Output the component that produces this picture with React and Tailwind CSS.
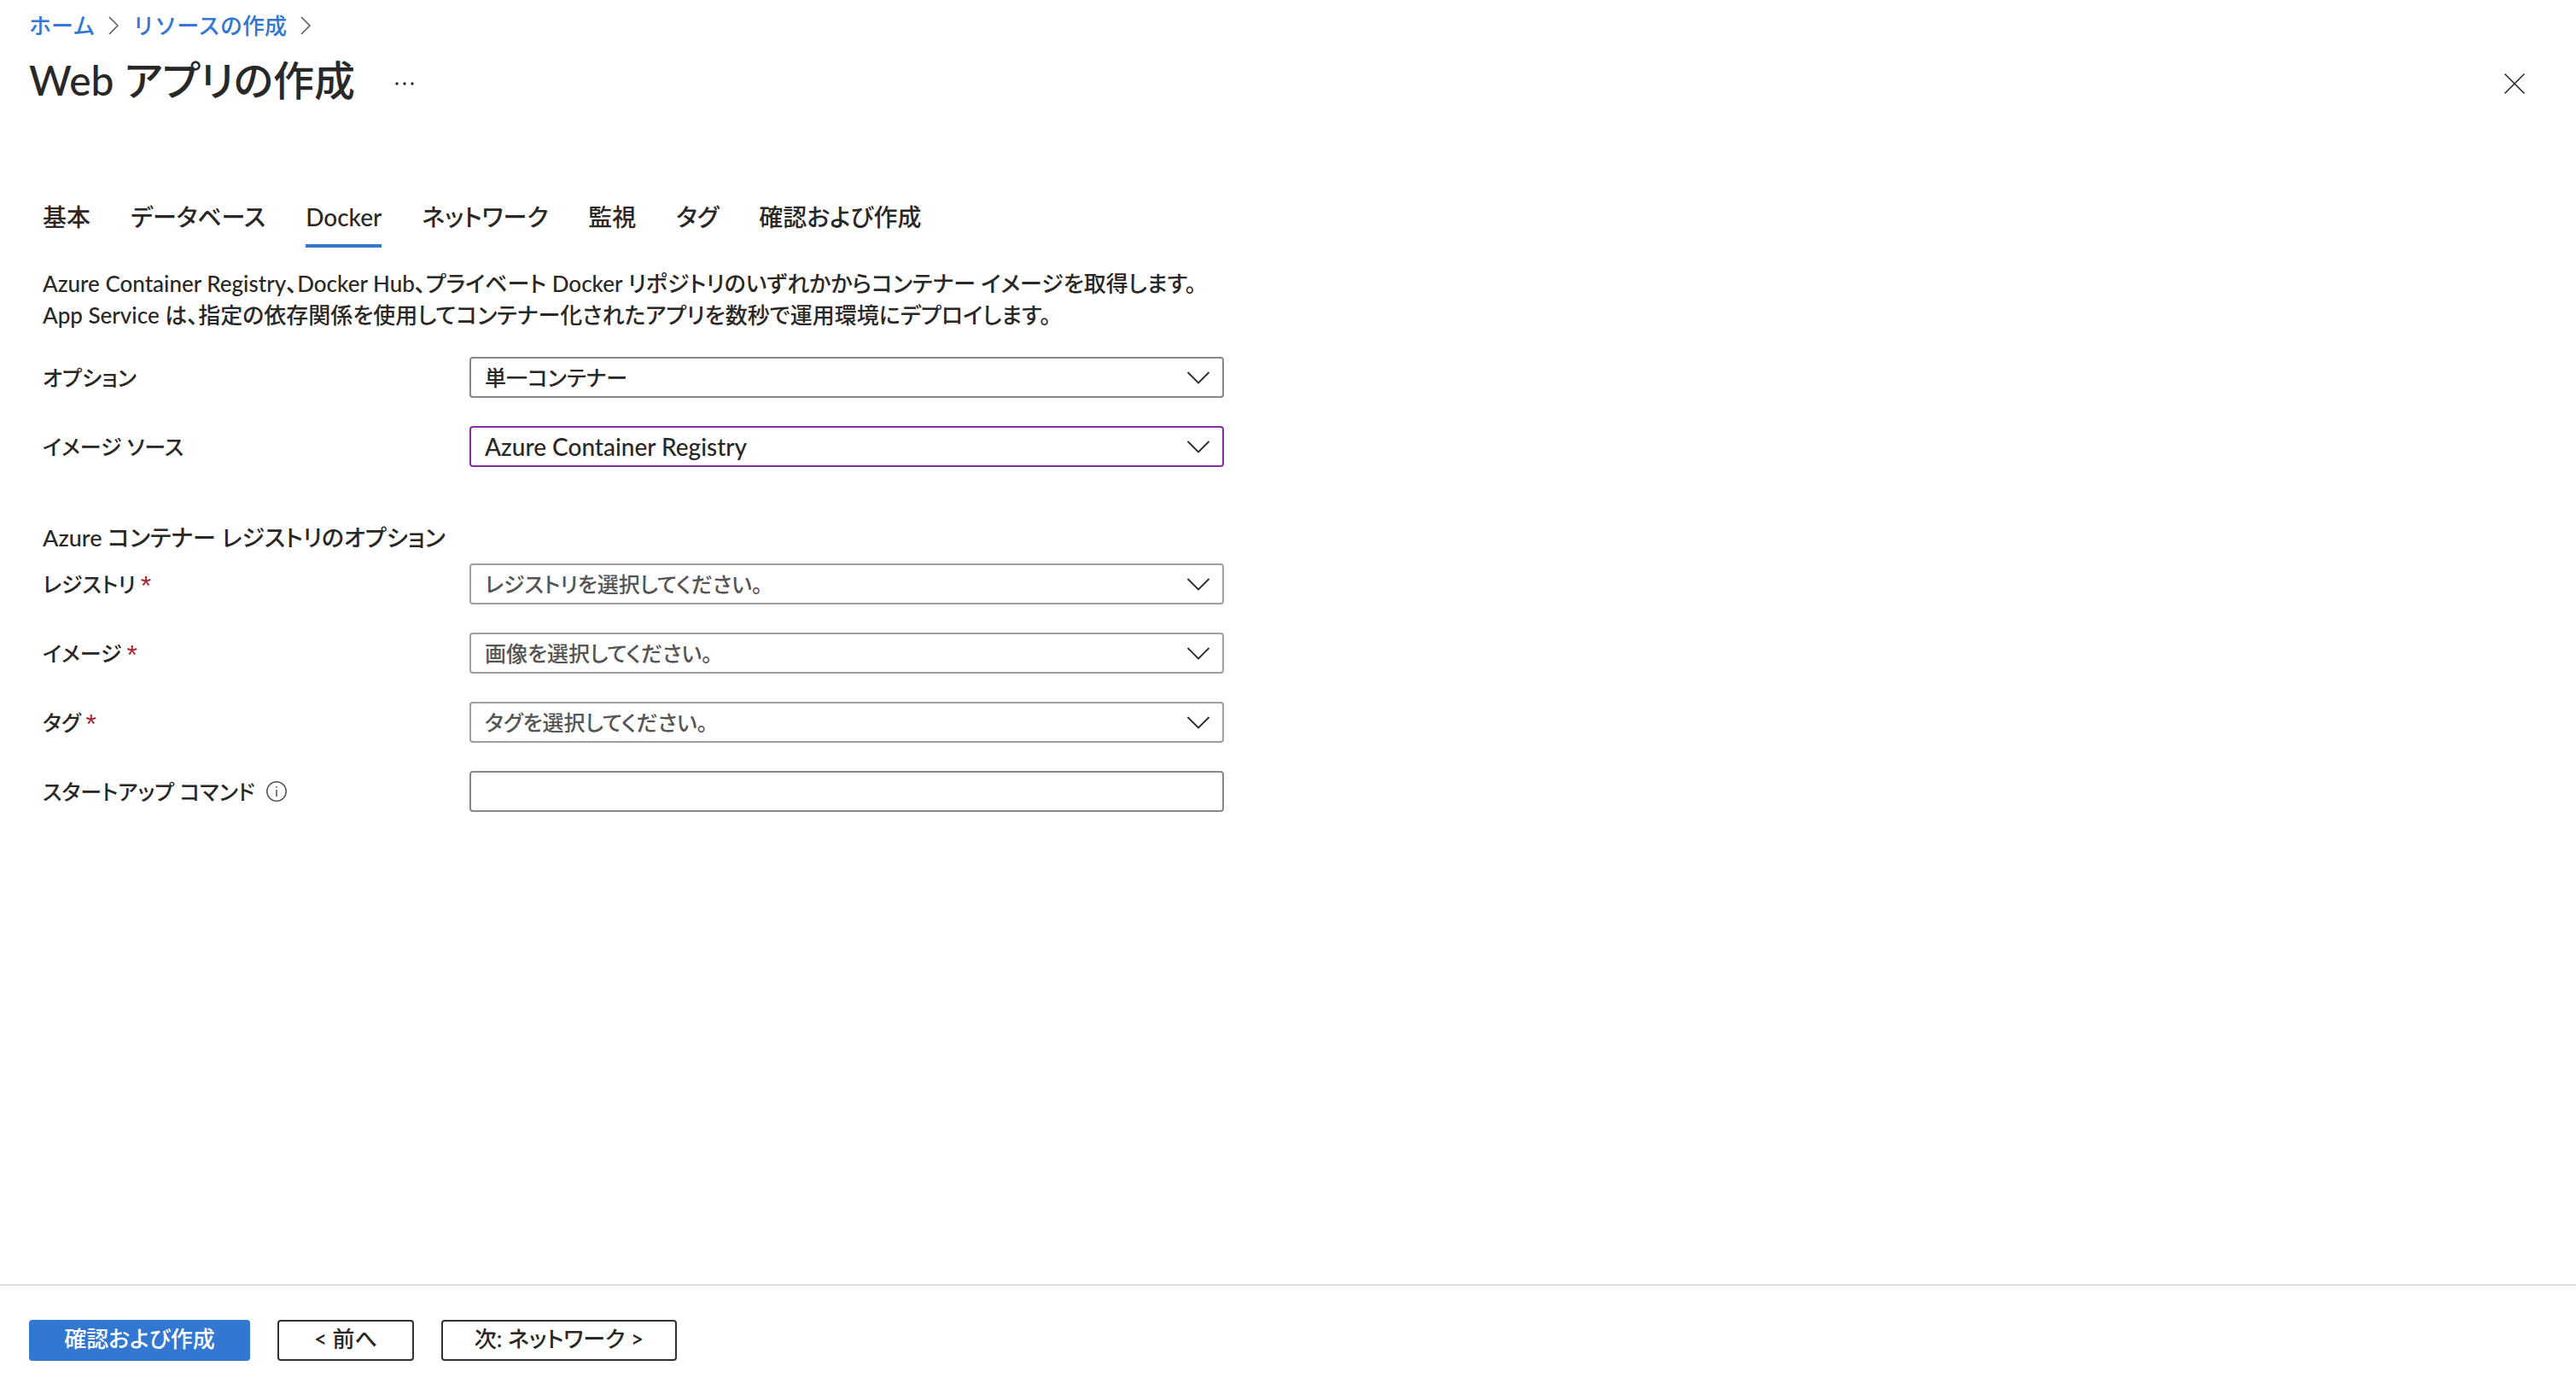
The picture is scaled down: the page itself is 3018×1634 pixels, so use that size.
import React, { useState } from 'react';

const tabs = ['基本', 'データベース', 'Docker', 'ネットワーク', '監視', 'タグ', '確認および作成'];

function Crumb({ children }) {
  return (
    <li className="flex items-center gap-4">
      <a href="#" className="text-[#3277d1] hover:underline">{children}</a>
      <svg className="mr-4 h-[22px] w-3" viewBox="0 0 12 22" fill="none" stroke="#555" strokeWidth="1.5" aria-hidden="true">
        <path d="M1 1 11 11 1 21" />
      </svg>
    </li>
  );
}

function Field({ id, label, required, info, children }) {
  return (
    <div className="flex h-12 items-center">
      <div className="flex w-[500px] shrink-0 items-center gap-3 text-[25px]">
        <label htmlFor={id} className="flex items-center gap-1.5">
          {label}
          {required && <span className="pt-1 font-['Liberation_Sans',sans-serif] text-[32px] font-normal leading-8 text-[#a4262c]">*</span>}
        </label>
        {info && (
          <button type="button" aria-label="情報">
            <svg className="size-[26px]" viewBox="0 0 26 26" fill="none" stroke="#555" strokeWidth="1.5">
              <circle cx="13" cy="13" r="11.2" />
              <path d="M13 11v8" />
              <circle cx="13" cy="7.8" r="0.9" fill="#555" stroke="none" />
            </svg>
          </button>
        )}
      </div>
      {children}
    </div>
  );
}

function Select({ id, value, placeholder, active }) {
  let look = 'border-[#a19f9d] text-[25px] text-[#555]';
  if (active) {
    look = 'border-[#8230a0] text-[28px]';
  } else if (value) {
    look = 'border-[#8a8886] text-[25px]';
  }

  return (
    <div className="relative min-w-0 flex-1">
      <select id={id} className={`h-12 w-full appearance-none rounded-sm border-2 bg-white pl-4 outline-none ${look}`}>
        <option>{value || placeholder}</option>
      </select>
      <svg
        className="pointer-events-none absolute right-4 top-4 h-4 w-7"
        viewBox="0 0 28 16"
        fill="none"
        stroke="#292827"
        strokeWidth="1.8"
        aria-hidden="true"
      >
        <path d="M1.5 2 14 14.5 26.5 2" />
      </svg>
    </div>
  );
}

function App() {
  const [activeTab, setActiveTab] = useState('Docker');
  const [command, setCommand] = useState('');

  return (
    <div className="flex min-h-screen flex-col bg-white font-['Lato','Noto_Sans_CJK_JP',sans-serif] text-[26px] font-medium leading-9 text-[#292827] [font-feature-settings:'palt']">
      <header className="px-[34px] pt-3">
        <nav aria-label="階層リンク">
          <ol className="flex [font-feature-settings:normal]">
            <Crumb>ホーム</Crumb>
            <Crumb>リソースの作成</Crumb>
          </ol>
        </nav>
        <div className="flex items-center pr-6 pt-2.5">
          <h1 className="pb-2 text-[48px] leading-[72px]">Web アプリの作成</h1>
          <button type="button" aria-label="その他" className="ml-11">
            <svg className="h-6 w-7" viewBox="0 0 28 24" fill="#292827">
              <circle cx="5" cy="12" r="1.7" />
              <circle cx="14" cy="12" r="1.7" />
              <circle cx="23" cy="12" r="1.7" />
            </svg>
          </button>
          <button type="button" aria-label="閉じる" className="ml-auto">
            <svg className="size-7" viewBox="0 0 28 28" fill="none" stroke="#292827" strokeWidth="1.6">
              <path d="M2.5 2.5 25.5 25.5M25.5 2.5 2.5 25.5" />
            </svg>
          </button>
        </div>
      </header>

      <main className="flex-1 px-[50px] pt-[90px]">
        <div role="tablist" className="flex gap-[47px] text-[28px]">
          {tabs.map((tab) => (
            <button
              key={tab}
              type="button"
              role="tab"
              aria-selected={tab === activeTab}
              onClick={() => setActiveTab(tab)}
              className={`h-[62px] border-b-4 pb-1.5 ${tab === activeTab ? 'border-[#3277d1]' : 'border-transparent'}`}
            >
              {tab}
            </button>
          ))}
        </div>

        <p className="pt-6 leading-[37px]">
          Azure Container Registry、Docker Hub、プライベート Docker リポジトリのいずれかからコンテナー イメージを取得します。
          <br />
          App Service は、指定の依存関係を使用してコンテナー化されたアプリを数秒で運用環境にデプロイします。
        </p>

        <form className="flex max-w-[1384px] flex-col gap-[33px] pt-[30px]">
          <Field id="option" label="オプション">
            <Select id="option" value="単一コンテナー" />
          </Field>
          <Field id="source" label="イメージ ソース">
            <Select id="source" value="Azure Container Registry" active />
          </Field>

          <h2 className="-mb-6 mt-7 text-[27px] leading-[43px]">Azure コンテナー レジストリのオプション</h2>
          <Field id="registry" label="レジストリ" required>
            <Select id="registry" placeholder="レジストリを選択してください。" />
          </Field>
          <Field id="image" label="イメージ" required>
            <Select id="image" placeholder="画像を選択してください。" />
          </Field>
          <Field id="tag" label="タグ" required>
            <Select id="tag" placeholder="タグを選択してください。" />
          </Field>
          <Field id="command" label="スタートアップ コマンド" info>
            <input
              id="command"
              type="text"
              value={command}
              onChange={(e) => setCommand(e.target.value)}
              className="h-12 min-w-0 flex-1 rounded-sm border-2 border-[#8a8886] px-4 outline-none"
            />
          </Field>
        </form>
      </main>

      <footer className="flex gap-8 border-t-2 border-[#dddddd] px-[34px] py-10">
        <button type="button" className="h-12 min-w-[259px] rounded-sm bg-[#3277d1] px-9 pb-1 text-white">
          確認および作成
        </button>
        <button type="button" className="h-12 min-w-40 rounded-sm border-2 border-[#323130] px-9 pb-1">
          &lt; 前へ
        </button>
        <button type="button" className="h-12 min-w-[276px] rounded-sm border-2 border-[#323130] px-9 pb-1">
          次: ネットワーク &gt;
        </button>
      </footer>
    </div>
  );
}

export default App;
